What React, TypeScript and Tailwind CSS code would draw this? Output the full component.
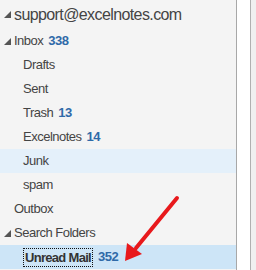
import React from "react";

const Tri = () => (
  <svg width="7" height="7" viewBox="0 0 7 7" className="shrink-0">
    <polygon points="7,0 7,7 0,7" fill="#555" />
  </svg>
);

const Row = ({
  indent,
  label,
  count,
  tri,
  bg,
  focus,
}: {
  indent: string;
  label: string;
  count?: string;
  tri?: boolean;
  bg?: string;
  focus?: boolean;
}) => (
  <div className={`h-[24px] flex items-center ${bg ?? ""} ${indent}`}>
    {tri && (
      <span className="w-[10px] flex items-center">
        <Tri />
      </span>
    )}
    {focus ? (
      <span className="border border-dotted border-[#111] px-[1px] leading-[17px] font-bold text-[#333] tracking-[-0.7px]">{label}</span>
    ) : (
      <span className="text-[#444]">{label}</span>
    )}
    {count && <span className="ml-[5px] font-bold text-[#2f6aa8]">{count}</span>}
  </div>
);

export default function App() {
  return (
    <div className="relative w-[256px] h-[270px] overflow-hidden flex bg-white" style={{ fontFamily: '"Liberation Sans", Arial, sans-serif' }}>
      <div className="w-[236px] h-full bg-[#f4f4f4] flex flex-col text-[13px] tracking-[-0.5px]">
        <div className="h-[29px] flex items-center pl-[4px]">
          <span className="w-[10px] flex items-center"><Tri /></span>
          <span className="text-[16px] text-[#444] tracking-[-0.6px]">support@excelnotes.com</span>
        </div>
        <Row indent="pl-[4px]" tri label="Inbox" count="338" />
        <Row indent="pl-[23px]" label="Drafts" />
        <Row indent="pl-[23px]" label="Sent" />
        <Row indent="pl-[23px]" label="Trash" count="13" />
        <Row indent="pl-[23px]" label="Excelnotes" count="14" />
        <Row indent="pl-[23px]" label="Junk" bg="bg-[#e4f0fa]" />
        <Row indent="pl-[23px]" label="spam" />
        <Row indent="pl-[14px]" label="Outbox" />
        <Row indent="pl-[4px]" tri label="Search Folders" />
        <Row indent="pl-[23px]" label="Unread Mail" count="352" bg="bg-[#cde5f7]" focus />
      </div>
      <div className="w-[1px] h-full bg-[#a8a8a8]" />
      <div className="w-[13px] h-full bg-white" />
      <div className="w-[1px] h-full bg-[#b0b0b0]" />
      <div className="flex-1 h-full bg-[#f0f0f0]" />
      <svg className="absolute left-0 top-0" width="256" height="270" viewBox="0 0 256 270">
        <line x1="177" y1="198" x2="136" y2="248" stroke="#e8191c" strokeWidth="4" strokeLinecap="round" />
        <polygon points="125,261 127,243 142,254" fill="#e8191c" />
      </svg>
    </div>
  );
}
